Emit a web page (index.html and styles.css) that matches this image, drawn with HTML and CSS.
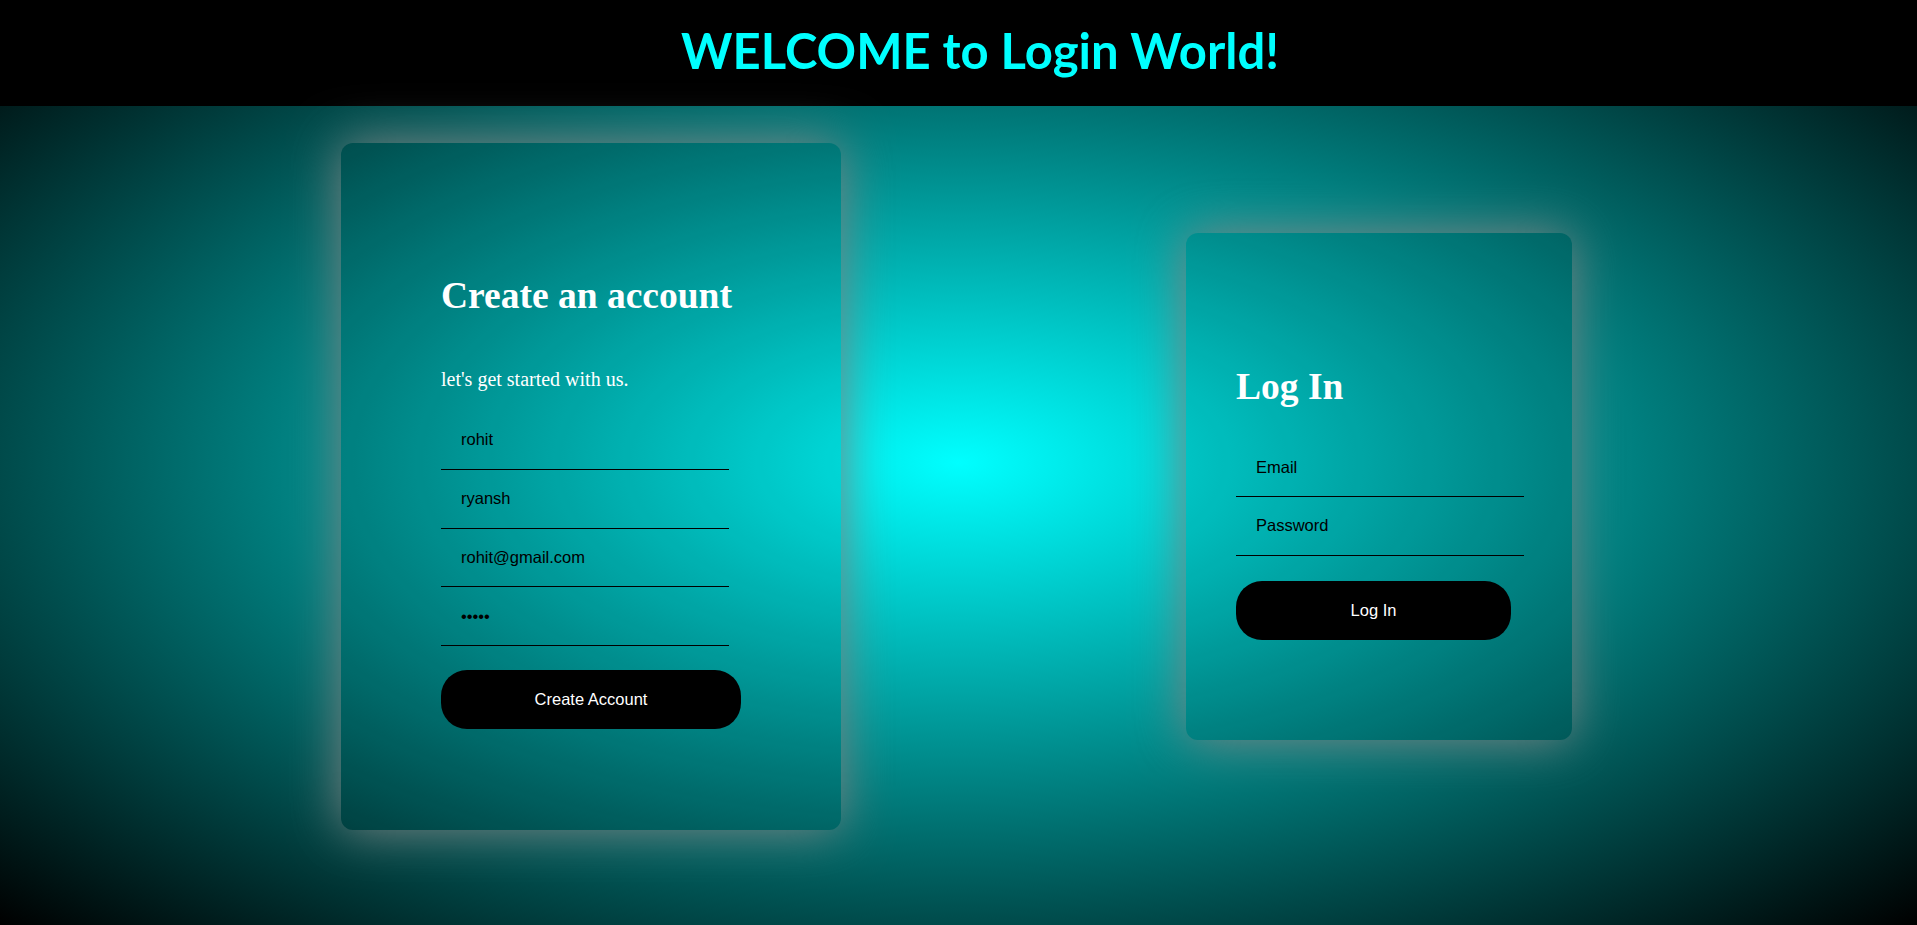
FILE: index.html
```html
<!DOCTYPE html>
<html lang="en">
<head>
<meta charset="utf-8">
<title>Login World</title>
<link rel="stylesheet" href="styles.css">
</head>
<body>
<header class="topbar">
  <h1 class="title">WELCOME to Login World!</h1>
</header>
<main class="stage">
  <section class="card card-signup">
    <h2 class="card-title">Create an account</h2>
    <p class="card-sub">let's get started with us.</p>
    <input class="field" type="text" value="rohit">
    <input class="field" type="text" value="ryansh">
    <input class="field" type="email" value="rohit@gmail.com">
    <input class="field" type="password" value="12345">
    <button class="btn btn-signup" type="button">Create Account</button>
  </section>
  <section class="card card-login">
    <h2 class="card-title">Log In</h2>
    <input class="field field-first" type="email" placeholder="Email">
    <input class="field" type="password" placeholder="Password">
    <button class="btn btn-login" type="button">Log In</button>
  </section>
</main>
</body>
</html>
```
FILE: styles.css
```css
html, body {
  margin: 0;
  padding: 0;
  height: 100%;
}
body {
  background: radial-gradient(#00ffff, #000000);
  background-repeat: no-repeat;
  min-height: 100vh;
  overflow: hidden;
}
.topbar {
  background: #000;
  height: 106px;
  box-sizing: border-box;
  padding-left: 43px;
  text-align: center;
}
.title {
  margin: 0;
  font-family: "Lato", "DejaVu Sans", sans-serif;
  font-weight: 700;
  font-size: 49px;
  line-height: 100px;
  color: #00ffff;
}
.stage {
  display: flex;
  justify-content: flex-start;
  align-items: center;
  gap: 345px;
  padding: 37px 0 0 341px;
}
.card {
  display: flex;
  flex-direction: column;
  align-items: flex-start;
  background: rgba(0, 0, 0, 0.08);
  border-radius: 12px;
  box-shadow: 0 0 50px gray;
  box-sizing: border-box;
  flex: none;
}
.card-signup {
  width: 500px;
  padding: 131px 100px 101px 100px;
}
.card-login {
  width: 386px;
  padding: 132px 48px 100px 50px;
}
.card-title {
  margin: 0;
  font-family: "Liberation Serif", "Times New Roman", serif;
  font-weight: 700;
  font-size: 37.5px;
  line-height: 43px;
  color: #fff;
}
.card-sub {
  margin: 51px 0 20px 0;
  font-family: "Liberation Serif", "Times New Roman", serif;
  font-size: 20px;
  line-height: 23px;
  color: #fff;
}
.card-login .card-title {
  margin-bottom: 30px;
}
.field {
  box-sizing: border-box;
  width: 288px;
  height: 58.75px;
  margin: 0;
  padding: 0 0 0 20px;
  border: none;
  border-bottom: 1px solid #000;
  background: transparent;
  outline: none;
  font-family: "Liberation Sans", Arial, sans-serif;
  font-size: 16.5px;
  color: #000;
}
.field::placeholder {
  color: #000;
  opacity: 1;
}
.btn {
  height: 59px;
  margin: 24px 0 0 0;
  border: none;
  border-radius: 26px;
  background: #000;
  color: #fff;
  font-family: "Liberation Sans", Arial, sans-serif;
  font-size: 16.5px;
  cursor: pointer;
}
.btn-signup {
  width: 300px;
}
.btn-login {
  width: 275px;
  margin-top: 25px;
}
```
